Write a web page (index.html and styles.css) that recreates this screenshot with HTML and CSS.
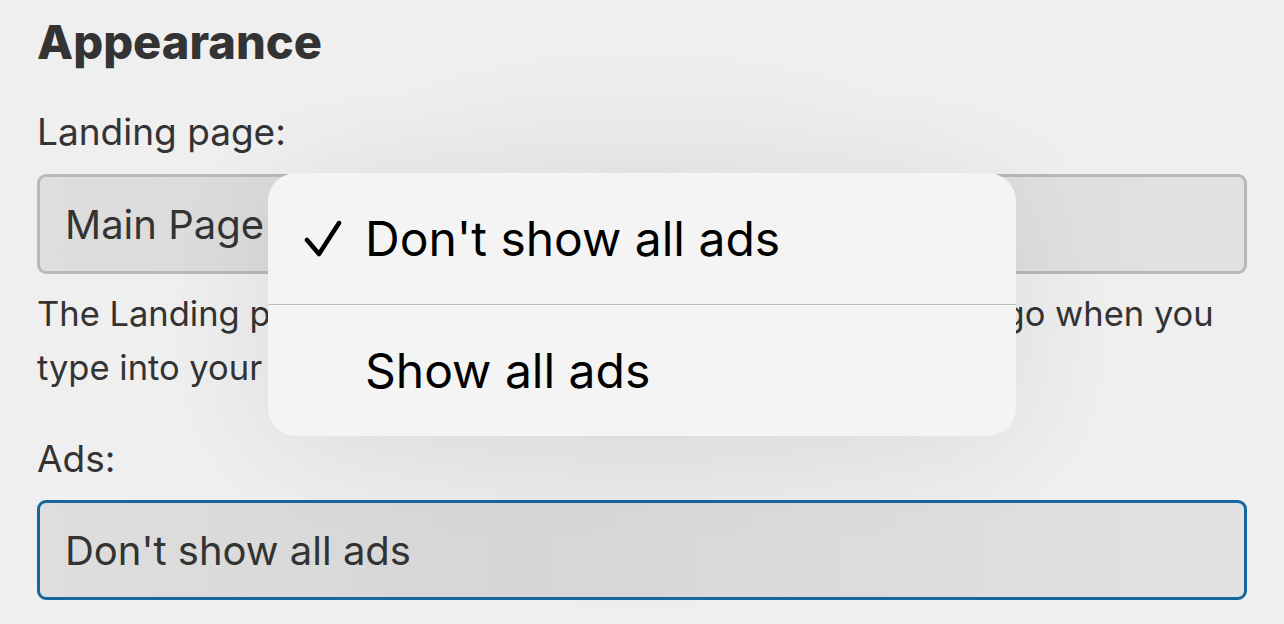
FILE: index.html
```html
<!DOCTYPE html>
<html lang="en">
<head>
    <meta charset="UTF-8">
    <meta name="viewport" content="width=device-width, initial-scale=1.0">
    <title>Settings</title>
    <link rel="stylesheet" href="styles.css">
</head>
<body>
    <div class="settings">
        <h2 class="group-title">Appearance</h2>

        <label class="field-label" for="landing">Landing page:</label>
        <div class="select" id="landing">Main Page</div>
        <p class="hint">The Landing page is the first page where your browser will go when you<br>type into your address bar without a search term.</p>

        <label class="field-label ads-label" for="ads">Ads:</label>
        <div class="select focused" id="ads">Don't show all ads</div>
    </div>

    <!-- native picker opened over the Ads select -->
    <div class="picker">
        <div class="picker-option selected">
            <span class="tick">
                <svg width="38" height="38" viewBox="0 0 38 38">
                    <path d="M3 20 L15 34 L35 3" fill="none" stroke="#000" stroke-width="4.5" stroke-linecap="round" stroke-linejoin="round"/>
                </svg>
            </span>
            <span>Don't show all ads</span>
        </div>
        <div class="picker-option">
            <span class="tick"></span>
            <span>Show all ads</span>
        </div>
    </div>
</body>
</html>
```

FILE: styles.css
```css
body {
    margin: 0;
    font-family: 'Inter', 'Noto Sans', sans-serif;
    color: #333;
    background:
        radial-gradient(ellipse 700px 420px at 640px 330px, #e2e2e2, rgba(226, 226, 226, 0) 70%),
        #efefef;
    min-height: 624px;
    overflow: hidden;
    position: relative;
}

.settings {
    padding: 10px 37px 0;
}

.group-title {
    margin: 0;
    font-size: 47px;
    font-weight: 800;
    line-height: 64px;
}

.field-label {
    display: block;
    margin-top: 36px;
    font-size: 37px;
    line-height: 44px;
}

.select {
    box-sizing: border-box;
    height: 100px;
    margin-top: 20px;
    padding: 0 25px;
    display: flex;
    align-items: center;
    font-size: 40px;
    background: linear-gradient(90deg, #dedede, #d6d6d6 40%, #e2e2e2);
    border: 3px solid #b8b8b8;
    border-radius: 9px;
}

.select.focused {
    margin-top: 19px;
    border-color: #17679e;
}

.hint {
    margin: 13px 0 0;
    font-size: 34.5px;
    line-height: 54px;
    white-space: nowrap;
}

.ads-label {
    margin-top: 42px;
}

.picker {
    position: absolute;
    left: 268px;
    top: 173px;
    width: 748px;
    height: 263px;
    background: #f4f4f4;
    border-radius: 28px;
    box-shadow: 0 10px 120px rgba(0, 0, 0, 0.06);
    color: #000;
    overflow: hidden;
}

.picker-option {
    height: 131px;
    display: flex;
    align-items: center;
    font-size: 48px;
}

.picker-option.selected {
    border-bottom: 1px solid #bcbcbc;
}

.tick {
    width: 97px;
    padding-left: 36px;
    box-sizing: border-box;
    display: flex;
    align-items: center;
}
```
